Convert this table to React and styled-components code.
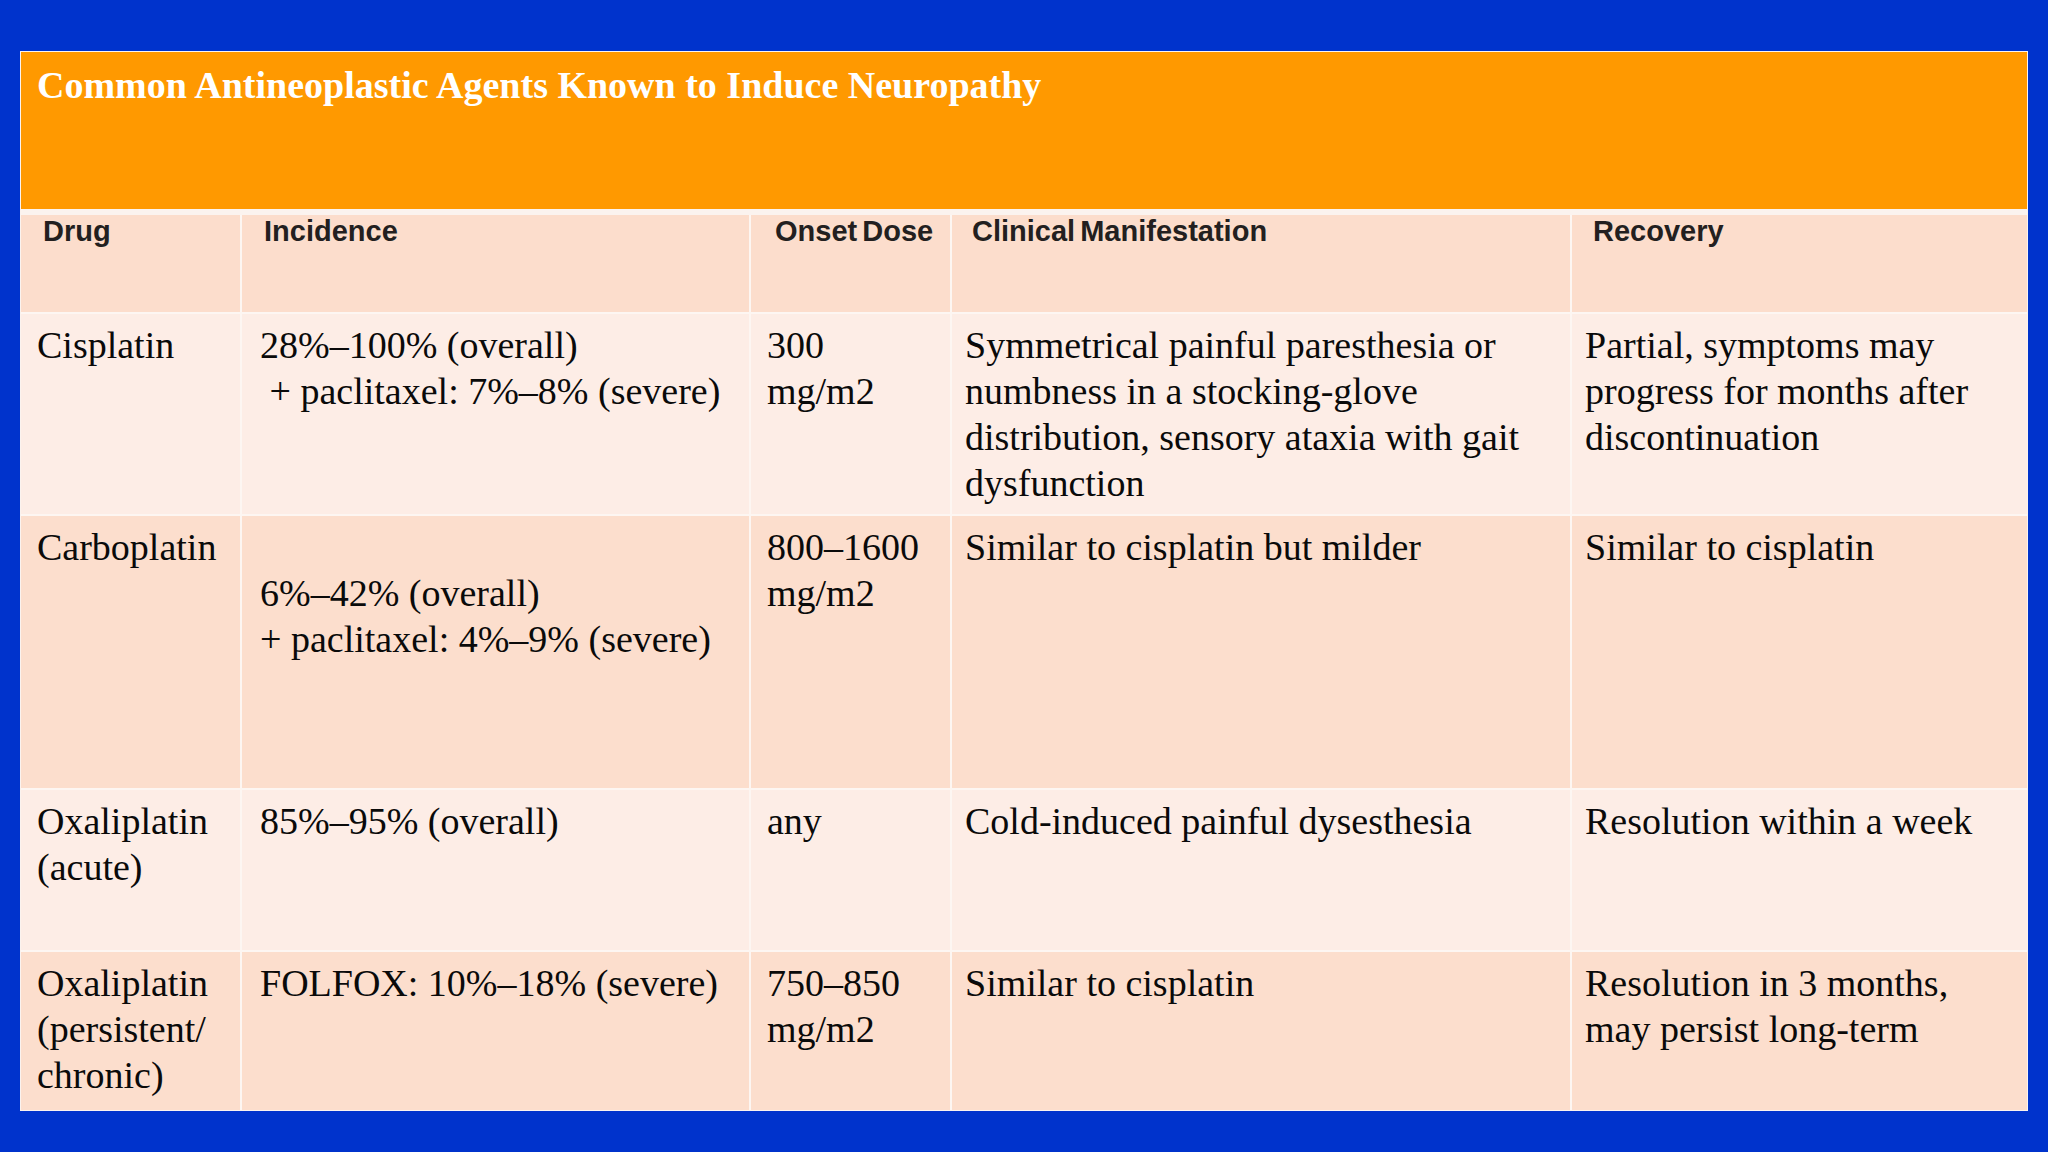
import React from "react";
import styled, { createGlobalStyle } from "styled-components";

const Global = createGlobalStyle`
  html, body { margin: 0; padding: 0; }
  body {
    background: #0033cc;
    width: 2048px;
    height: 1152px;
    overflow: hidden;
  }
`;

const Slide = styled.div`
  width: 2048px;
  height: 1152px;
  padding: 51px 0 0 20px;
  box-sizing: border-box;
`;

const Frame = styled.div`
  width: 2008px;
  box-sizing: border-box;
  background: #fbf3ef;
  padding: 1px;
  display: flex;
  flex-direction: column;
  gap: 6px;
`;

const Title = styled.div`
  height: 157px;
  box-sizing: border-box;
  background: #ff9900;
  color: #ffffff;
  font-family: "Liberation Serif", "Times New Roman", serif;
  font-weight: bold;
  font-size: 38px;
  line-height: 46px;
  padding: 10px 0 0 16px;
`;

const Grid = styled.div`
  display: grid;
  grid-template-columns: 219px 507px 199px 618px 1fr;
  grid-template-rows: 97px 200px 272px 160px 158px;
  gap: 2px;
  background: #fdf6f2;
`;

const HeadCell = styled.div`
  background: #fcddcc;
  color: #231f20;
  font-family: "Liberation Sans", Arial, sans-serif;
  font-weight: bold;
  font-size: 29px;
  line-height: 33px;
  word-spacing: -3px;
  padding: 0 0 0 ${(p) => p.$pad}px;
  white-space: nowrap;
`;

const Cell = styled.div`
  background: ${(p) => (p.$light ? "#fdede6" : "#fcdecd")};
  color: #0a0a0a;
  font-family: "Liberation Serif", "Times New Roman", serif;
  font-size: 38px;
  line-height: 46px;
  padding: 8px 0 0 ${(p) => p.$pad}px;
  white-space: nowrap;
`;

const headers = [
  { t: "Drug", pad: 22 },
  { t: "Incidence", pad: 22 },
  { t: "Onset Dose", pad: 24 },
  { t: "Clinical Manifestation", pad: 20 },
  { t: "Recovery", pad: 21 },
];

const dataPad = [16, 18, 16, 13, 13];

const rows = [
  [
    ["Cisplatin"],
    ["28%–100% (overall)", "\u00a0+ paclitaxel: 7%–8% (severe)"],
    ["300", "mg/m2"],
    [
      "Symmetrical painful paresthesia or",
      "numbness in a stocking-glove",
      "distribution, sensory ataxia with gait",
      "dysfunction",
    ],
    ["Partial, symptoms may", "progress for months after", "discontinuation"],
  ],
  [
    ["Carboplatin"],
    ["\u00a0", "6%–42% (overall)", "+ paclitaxel: 4%–9% (severe)"],
    ["800–1600", "mg/m2"],
    ["Similar to cisplatin but milder"],
    ["Similar to cisplatin"],
  ],
  [
    ["Oxaliplatin", "(acute)"],
    ["85%–95% (overall)"],
    ["any"],
    ["Cold-induced painful dysesthesia"],
    ["Resolution within a week"],
  ],
  [
    ["Oxaliplatin", "(persistent/", "chronic)"],
    ["FOLFOX: 10%–18% (severe)"],
    ["750–850", "mg/m2"],
    ["Similar to cisplatin"],
    ["Resolution in 3 months,", "may persist long-term"],
  ],
];

const Lines = ({ lines }) =>
  lines.map((l, i) => (
    <React.Fragment key={i}>
      {i > 0 && <br />}
      {l}
    </React.Fragment>
  ));

export default function App() {
  return (
    <Slide>
      <Global />
      <Frame>
        <Title>Common Antineoplastic Agents Known to Induce Neuropathy</Title>
        <Grid>
          {headers.map((h) => (
            <HeadCell key={h.t} $pad={h.pad}>
              {h.t}
            </HeadCell>
          ))}
          {rows.map((row, r) =>
            row.map((cell, c) => (
              <Cell key={`${r}-${c}`} $light={r % 2 === 0} $pad={dataPad[c]}>
                <Lines lines={cell} />
              </Cell>
            ))
          )}
        </Grid>
      </Frame>
    </Slide>
  );
}
